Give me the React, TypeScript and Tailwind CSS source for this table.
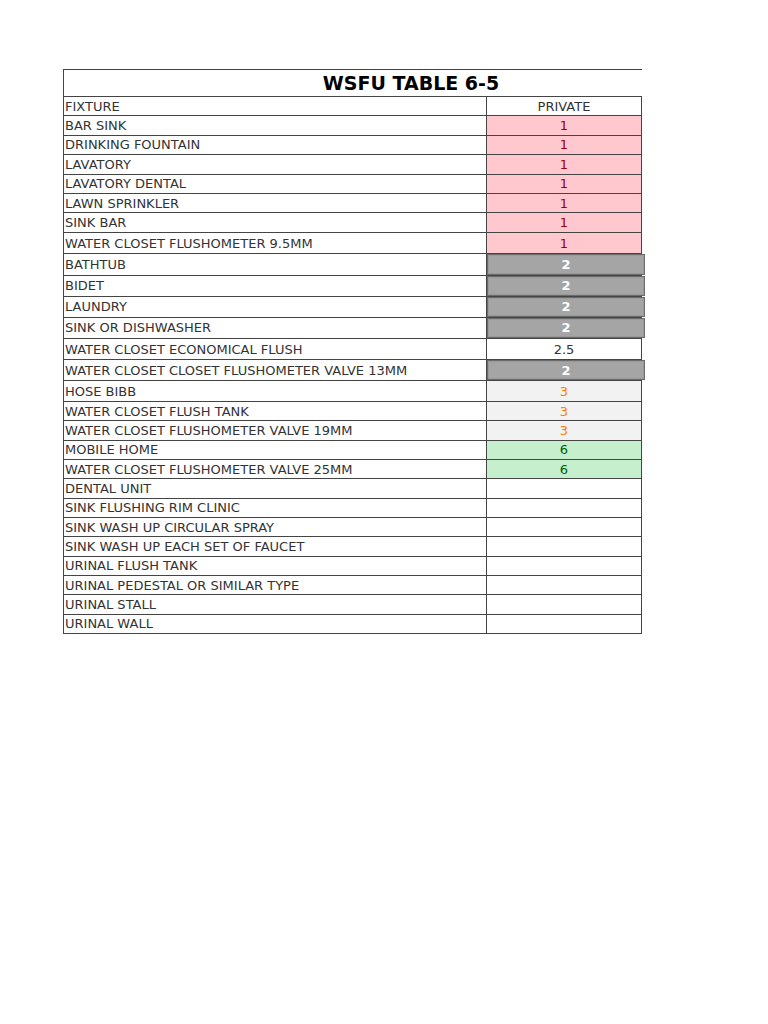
type Kind = 'bad' | 'check' | 'calc' | 'good' | 'plain';

type Row = { name: string; value?: string; kind: Kind; h: string };

const rows: Row[] = [
  { name: 'BAR SINK', value: '1', kind: 'bad', h: 'h-[19.4px]' },
  { name: 'DRINKING FOUNTAIN', value: '1', kind: 'bad', h: 'h-[19.4px]' },
  { name: 'LAVATORY', value: '1', kind: 'bad', h: 'h-[19.4px]' },
  { name: 'LAVATORY DENTAL', value: '1', kind: 'bad', h: 'h-[19.4px]' },
  { name: 'LAWN SPRINKLER', value: '1', kind: 'bad', h: 'h-[19.4px]' },
  { name: 'SINK BAR', value: '1', kind: 'bad', h: 'h-[19.4px]' },
  { name: 'WATER CLOSET FLUSHOMETER 9.5MM', value: '1', kind: 'bad', h: 'h-[21.6px]' },
  { name: 'BATHTUB', value: '2', kind: 'check', h: 'h-[21.2px]' },
  { name: 'BIDET', value: '2', kind: 'check', h: 'h-[21.2px]' },
  { name: 'LAUNDRY', value: '2', kind: 'check', h: 'h-[21.2px]' },
  { name: 'SINK OR DISHWASHER', value: '2', kind: 'check', h: 'h-[21.2px]' },
  { name: 'WATER CLOSET ECONOMICAL FLUSH', value: '2.5', kind: 'plain', h: 'h-[21.2px]' },
  { name: 'WATER CLOSET CLOSET FLUSHOMETER VALVE 13MM', value: '2', kind: 'check', h: 'h-[21.2px]' },
  { name: 'HOSE BIBB', value: '3', kind: 'calc', h: 'h-[20.4px]' },
  { name: 'WATER CLOSET FLUSH TANK', value: '3', kind: 'calc', h: 'h-[19.35px]' },
  { name: 'WATER CLOSET FLUSHOMETER VALVE 19MM', value: '3', kind: 'calc', h: 'h-[19.35px]' },
  { name: 'MOBILE HOME', value: '6', kind: 'good', h: 'h-[19.35px]' },
  { name: 'WATER CLOSET FLUSHOMETER VALVE 25MM', value: '6', kind: 'good', h: 'h-[19.35px]' },
  { name: 'DENTAL UNIT', kind: 'plain', h: 'h-[19.35px]' },
  { name: 'SINK FLUSHING RIM CLINIC', kind: 'plain', h: 'h-[19.35px]' },
  { name: 'SINK WASH UP CIRCULAR SPRAY', kind: 'plain', h: 'h-[19.35px]' },
  { name: 'SINK WASH UP EACH SET OF FAUCET', kind: 'plain', h: 'h-[19.35px]' },
  { name: 'URINAL FLUSH TANK', kind: 'plain', h: 'h-[19.35px]' },
  { name: 'URINAL PEDESTAL OR SIMILAR TYPE', kind: 'plain', h: 'h-[19.35px]' },
  { name: 'URINAL STALL', kind: 'plain', h: 'h-[19.35px]' },
  { name: 'URINAL WALL', kind: 'plain', h: 'h-[19.35px]' },
];

const cellStyle: Record<Kind, string> = {
  bad: 'bg-[#ffc7ce] text-[#9c0006]',
  check: 'bg-[#a5a5a5] text-white font-bold border border-[#6b6b6b] shadow-[inset_0_0_0_1px_#9a9a9a] mr-[-4px]',
  calc: 'bg-[#f2f2f2] text-[#fa7d00]',
  good: 'bg-[#c6efce] text-[#006100]',
  plain: 'bg-white text-[#333]',
};

export default function App() {
  return (
    <div className="min-h-screen bg-white pt-[69px] pl-[63px] font-['DejaVu_Sans',sans-serif] text-[13px] text-[#333]">
      <div className="w-[579px] border-t border-[#444]">
        {/* title */}
        <div className="h-[27px] border-l border-b border-[#444] flex items-center justify-center pl-[116px]">
          <span className="text-[19px] font-bold text-black leading-none">WSFU TABLE 6-5</span>
        </div>

        {/* header */}
        <div className="flex h-[19.4px] border-b border-[#444]">
          <div className="w-[424px] border-l border-r border-[#444] pl-px flex items-center leading-none">FIXTURE</div>
          <div className="flex-1 border-r border-[#444] flex items-center justify-center leading-none">PRIVATE</div>
        </div>

        {rows.map((r) => (
          <div key={r.name} className={`flex ${r.h} border-b border-[#444]`}>
            <div className="w-[424px] border-l border-r border-[#444] pl-px flex items-center leading-none whitespace-nowrap">
              {r.name}
            </div>
            <div className="flex-1 border-r border-[#444] flex">
              <div className={`flex-1 flex items-center justify-center leading-none ${cellStyle[r.kind]}`}>
                {r.value}
              </div>
            </div>
          </div>
        ))}
      </div>
    </div>
  );
}
